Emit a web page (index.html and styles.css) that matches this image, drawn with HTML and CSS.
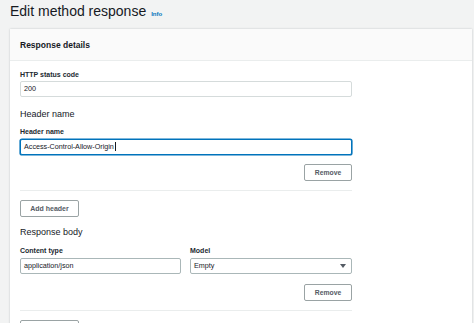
FILE: index.html
```html
<!DOCTYPE html>
<html lang="en">
<head>
    <meta charset="UTF-8">
    <title>Edit method response</title>
    <link rel="stylesheet" href="styles.css">
</head>
<body>
    <div class="page-head">
        <h1>Edit method response</h1>
        <a class="info" href="#">Info</a>
    </div>
    <div class="card">
        <div class="card-header">Response details</div>
        <div class="card-body">
            <div class="field">
                <label>HTTP status code</label>
                <div class="input readonly">200</div>
            </div>

            <h3>Header name</h3>
            <div class="field">
                <label>Header name</label>
                <div class="input focused">Access-Control-Allow-Origin<span class="caret"></span></div>
            </div>
            <div class="remove-row">
                <button class="btn">Remove</button>
            </div>
            <div class="divider"></div>
            <button class="btn add">Add header</button>

            <h3 class="body-title">Response body</h3>
            <div class="row">
                <div class="field">
                    <label>Content type</label>
                    <div class="input">application/json</div>
                </div>
                <div class="field">
                    <label>Model</label>
                    <div class="input select">Empty<span class="arrow"></span></div>
                </div>
            </div>
            <div class="remove-row second">
                <button class="btn">Remove</button>
            </div>
            <div class="divider"></div>
            <!-- next button is cut off by the window edge -->
            <button class="btn add" aria-label="Add model"></button>
        </div>
    </div>
</body>
</html>
```

FILE: styles.css
```css
body {
    margin: 0;
    background: #f2f3f3;
    font-family: 'Liberation Sans', Arial, sans-serif;
    color: #16191f;
    overflow: hidden;
}
.page-head {
    height: 29px;
    padding-left: 10px;
    display: flex;
    align-items: baseline;
    gap: 5px;
}
h1 {
    margin: 0;
    font-size: 14px;
    font-weight: 400;
    line-height: 18px;
    padding-top: 2px;
}
.info {
    font-size: 6px;
    font-weight: 700;
    color: #0073bb;
    text-decoration: none;
}
.card {
    margin: 0 2px 0 10px;
    background: #fff;
    box-shadow: 0 0 2px rgba(0, 28, 36, 0.2);
    min-height: 320px;
}
.card-header {
    height: 32px;
    line-height: 32px;
    padding-left: 10px;
    background: #fafafa;
    border-bottom: 1px solid #eaeded;
    box-sizing: border-box;
    font-size: 8.5px;
    font-weight: 700;
}
.card-body {
    padding: 9px 10px 0;
    width: 332px;
}
.field label {
    display: block;
    font-size: 7px;
    font-weight: 700;
    line-height: 10px;
    margin-bottom: 1px;
    color: #232a31;
}
.input {
    position: relative;
    height: 16px;
    line-height: 14px;
    box-sizing: border-box;
    border: 1px solid #aab7b8;
    border-radius: 2px;
    padding: 0 3px;
    font-size: 7.2px;
    background: #fff;
}
.input.readonly {
    border-color: #d5dbdb;
}
.input.focused {
    border-color: #0073bb;
    box-shadow: 0 0 0 0.6px #0073bb;
}
.caret {
    display: inline-block;
    width: 0;
    height: 9px;
    border-left: 1px solid #16191f;
    vertical-align: -2px;
    margin-left: 1px;
}
.arrow {
    position: absolute;
    right: 5px;
    top: 5px;
    border-left: 3px solid transparent;
    border-right: 3px solid transparent;
    border-top: 4px solid #545b64;
}
h3 {
    margin: 11px 0 7px;
    font-size: 9px;
    font-weight: 400;
    line-height: 12px;
}
h3 + .field label {
    margin-bottom: 2px;
}
.body-title {
    margin: 9px 0 8px;
}
.row {
    display: grid;
    grid-template-columns: 161px 162px;
    gap: 9px;
}
.row .field label {
    margin-bottom: 2px;
}
.remove-row {
    margin-top: 9px;
    display: flex;
    justify-content: flex-end;
}
.remove-row.second {
    margin-top: 10px;
}
.btn {
    height: 17px;
    padding: 0;
    background: #fff;
    border: 1px solid #9aa3a4;
    border-radius: 2px;
    font-family: inherit;
    font-size: 6.8px;
    font-weight: 700;
    color: #545b64;
    width: 48px;
    box-sizing: border-box;
}
.btn.add {
    display: block;
    width: 59px;
    font-size: 7px;
    margin-top: 9px;
}
.divider {
    margin-top: 9px;
    border-top: 1px solid #eaeded;
}
```
